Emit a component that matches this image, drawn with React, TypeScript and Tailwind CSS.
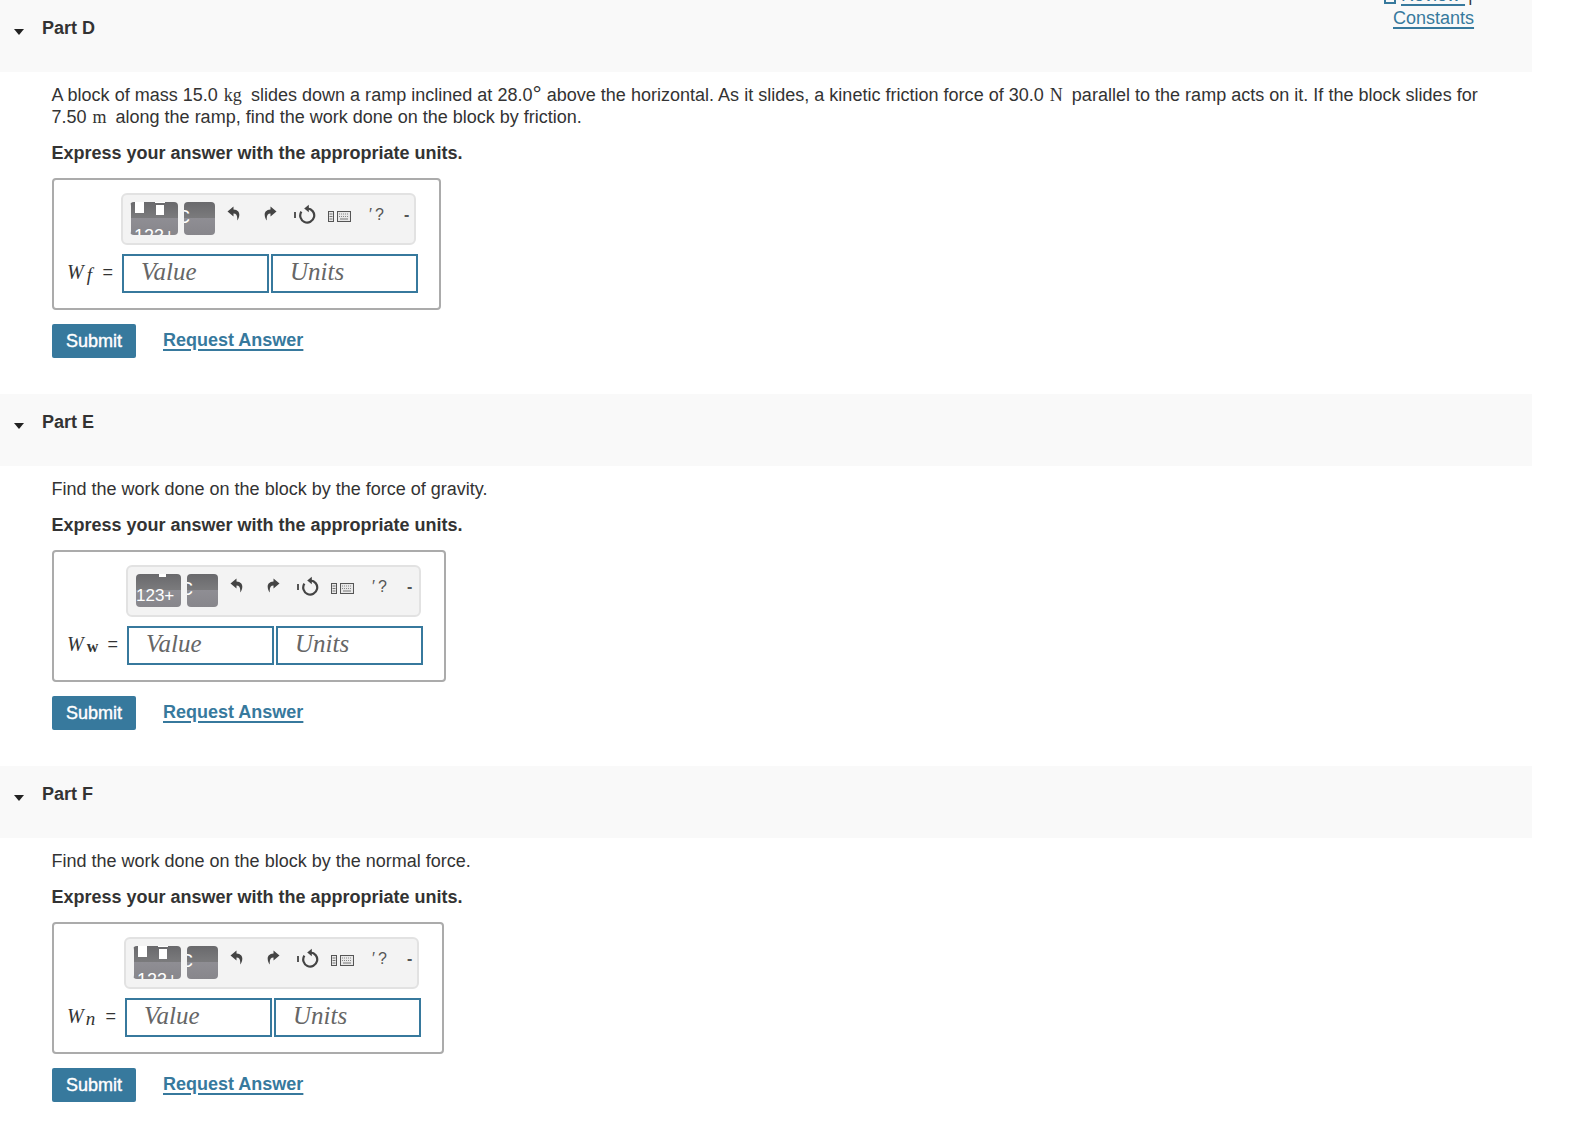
import React from 'react';

interface PartData {
  name: string;
  sub: string;
  subClass: string;
  labelClass: string;
  clipped: boolean;
  lines: React.ReactNode;
}

const Unit = ({ children }: { children: React.ReactNode }) => (
  <span className="font-['Liberation_Serif',serif] ml-[1px] mr-[4px]">{children}</span>
);

const parts: PartData[] = [
  {
    name: 'Part D',
    sub: 'f',
    subClass: 'italic text-[19px] ml-[3px]',
    labelClass: 'w-[56px]',
    clipped: true,
    lines: (
      <>
        <span className="tracking-[0.012px]">
          A block of mass 15.0 <Unit>kg</Unit> slides down a ramp inclined at 28.0
          <span className="text-[23px] leading-[0] align-[-1px]">°</span> above the horizontal. As it slides, a kinetic friction force
          of 30.0 <Unit>N</Unit> parallel to the ramp acts on it. If the block slides for
        </span>
        <br />
        7.50 <Unit>m</Unit> along the ramp, find the work done on the block by friction.
      </>
    ),
  },
  {
    name: 'Part E',
    sub: 'w',
    subClass: 'font-bold text-[16px] ml-[3px]',
    labelClass: 'w-[61px]',
    clipped: false,
    lines: 'Find the work done on the block by the force of gravity.',
  },
  {
    name: 'Part F',
    sub: 'n',
    subClass: 'italic text-[19px] ml-[2px]',
    labelClass: 'w-[59px]',
    clipped: true,
    lines: 'Find the work done on the block by the normal force.',
  },
];

const UndoIcon = ({ flip }: { flip?: boolean }) => (
  <svg viewBox="0 0 14 15" className={flip ? 'w-[14px] h-[15px] -scale-x-100' : 'w-[14px] h-[15px]'}>
    <path d="M6.5 0.5 L0.5 5.5 L6.5 10.5 V7.4 C9.5 7.4 10.6 9.5 10.2 14.5 C12.6 11.5 14.6 4 6.5 3.4 Z" fill="#444" />
  </svg>
);

const ResetIcon = () => (
  <svg viewBox="0 0 18 20" className="w-[18px] h-[20px]">
    <path d="M9.5 4.5 A7 7 0 1 1 3.4 7.6" fill="none" stroke="#444" strokeWidth="2.2" />
    <path d="M6.2 4.5 L10.8 0.8 V8.2 Z" fill="#444" />
  </svg>
);

const SmallKeys = () => (
  <svg viewBox="0 0 6 11" className="w-[6px] h-[11px]">
    <rect x="0.5" y="0.5" width="5" height="10" fill="#e8e8e8" stroke="#555" />
    <path d="M1.5 3h3M1.5 5.5h3M1.5 8h3" stroke="#777" />
  </svg>
);

const BigKeys = () => (
  <svg viewBox="0 0 14 11" className="w-[14px] h-[11px]">
    <rect x="0.5" y="0.5" width="13" height="10" fill="#e8e8e8" stroke="#555" />
    <path d="M2 3h10M2 5.5h10" stroke="#888" strokeDasharray="1 1" />
    <path d="M3 8h8" stroke="#777" />
  </svg>
);

const Toolbar = ({ clipped }: { clipped: boolean }) => (
  <div className={`flex items-start -ml-[1px] h-[52px] w-[295px] rounded-md border-2 border-[#e2e2e2] bg-[#f3f3f3] ${clipped ? 'pl-[7px]' : 'pl-[8px]'} pt-[7px] text-[#444]`}>
    <div className={`relative ${clipped ? 'w-[48px]' : 'w-[45px]'} h-[33px] rounded-[4px] overflow-hidden bg-[linear-gradient(#69696c,#7b7b7d_49%,#8f8e94_49%,#87868b)] text-white text-[18px]`}>
      {clipped ? (
        <>
          <div className="absolute left-0 top-0 w-[1px] h-[33px] bg-[#f3f3f3]"></div>
          <div className="absolute left-[5px] top-0 w-[9px] h-[11px] bg-white"></div>
          <div className="absolute left-[26px] top-[3px] w-[8px] h-[10px] bg-white"></div>
          <div className="absolute left-[25px] top-0 w-[10px] h-[1px] bg-white"></div>
          <span className="absolute left-[4px] top-[25px] leading-none">123+</span>
        </>
      ) : (
        <>
          <div className="absolute left-[23px] top-0 w-[7px] h-[3px] bg-white"></div>
          <span className="absolute left-0 top-[13px] text-[17px] leading-none">123+</span>
        </>
      )}
    </div>
    <div className="relative ml-[6px] w-[31px] h-[33px] rounded-[4px] overflow-hidden bg-[linear-gradient(#69696c,#7b7b7d_49%,#8f8e94_49%,#87868b)] text-white text-[18px]">
      <span className="absolute left-[-7px] top-[6px] leading-none">C</span>
    </div>
    <div className="ml-[12px] mt-[4px]">
      <UndoIcon />
    </div>
    <div className="ml-[22px] mt-[4px]">
      <UndoIcon flip />
    </div>
    <div className="ml-[17px] mt-[10px] w-[1.5px] h-[6px] bg-[#555]"></div>
    <div className="ml-[2.5px] mt-[2px]">
      <ResetIcon />
    </div>
    <div className="ml-[12px] mt-[9px]">
      <SmallKeys />
    </div>
    <div className="ml-[3px] mt-[9px]">
      <BigKeys />
    </div>
    <span className="ml-[18px] mt-[3px] text-[16px] leading-[20px] text-[#555]">′</span>
    <span className="ml-[3px] mt-[3px] text-[16px] leading-[20px] text-[#555]">?</span>
    <span className="ml-[20px] mt-[3px] text-[16px] font-bold leading-[20px] text-[#555]">-</span>
  </div>
);

const AnswerBox = ({ part }: { part: PartData }) => (
  <div className="inline-grid grid-cols-[auto_auto] border-2 border-[#ababab] rounded-[4px] bg-white pl-[12px] pr-[21px] pt-[13px] pb-[15px]">
    <div></div>
    <div className="mb-[9px]">
      <Toolbar clipped={part.clipped} />
    </div>
    <div className={`${part.labelClass} h-[36px] self-start flex items-center pl-[1px] font-['Liberation_Serif',serif] text-[#333] text-[20px]`}>
      <span className="italic">W</span>
      <span className={`${part.subClass} mt-[5px] leading-none`}>{part.sub}</span>
      <span className="ml-auto mr-[9px] font-['Liberation_Sans',sans-serif] text-[18px]">=</span>
    </div>
    <div className="flex gap-[2px]">
      <div className="w-[147px] h-[39px] border-2 border-[#37799d] pl-[17px] font-['Liberation_Serif',serif] italic text-[25px] leading-[32px] text-[#666]">Value</div>
      <div className="w-[147px] h-[39px] border-2 border-[#37799d] pl-[17px] font-['Liberation_Serif',serif] italic text-[25px] leading-[32px] text-[#666]">Units</div>
    </div>
  </div>
);

const PartSection = ({ part }: { part: PartData }) => (
  <section className="pb-[36px]">
    <div className="w-[1532px] h-[72px] bg-[#f9f9f9] flex items-start pt-[16px]">
      <div className="ml-[14px] mt-[13px] w-0 h-0 border-l-[5.5px] border-r-[5.5px] border-t-[6px] border-l-transparent border-r-transparent border-t-[#222]"></div>
      <h2 className="ml-[18px] text-[18px] leading-[24px] font-bold text-[#333]">{part.name}</h2>
    </div>
    <div className="pl-[52px] pt-[12px]">
      <p className="-ml-[0.5px] text-[18px] leading-[22px] text-[#333] whitespace-nowrap">{part.lines}</p>
      <p className="-ml-[0.5px] mt-[14px] text-[18px] leading-[22px] font-bold text-[#333]">Express your answer with the appropriate units.</p>
      <div className="mt-[14px] flex">
        <AnswerBox part={part} />
      </div>
      <div className="mt-[14px] flex items-center">
        <button className="w-[84px] h-[34px] rounded-[2px] bg-[#37799d] text-white text-[18px] leading-none [-webkit-text-stroke:0.4px_white]">Submit</button>
        <a className="ml-[27px] mb-[2px] text-[18px] font-bold text-[#37799d] underline underline-offset-[3px] decoration-[2px]">Request Answer</a>
      </div>
    </div>
  </section>
);

export default function App() {
  return (
    <div className="relative h-[1126px] overflow-hidden bg-white font-['Liberation_Sans',sans-serif]">
      {parts.map((part) => (
        <PartSection key={part.name} part={part} />
      ))}
      <div className="absolute left-[1384px] top-[-17px] w-[100px] text-[18px] leading-[24px] text-[#37799d]">
        <div className="flex items-center">
          <div className="w-[12px] h-[12px] border-2 border-[#37799d] mt-[6px]"></div>
          <a className="ml-[5px] w-[64px] underline underline-offset-[3px] decoration-[2px]">Review&nbsp;</a>
          <span className="ml-[3px] text-[#333]">|</span>
        </div>
        <a className="block -mt-[1px] ml-[9px] underline underline-offset-[3px] decoration-[2px]">Constants</a>
      </div>
    </div>
  );
}
